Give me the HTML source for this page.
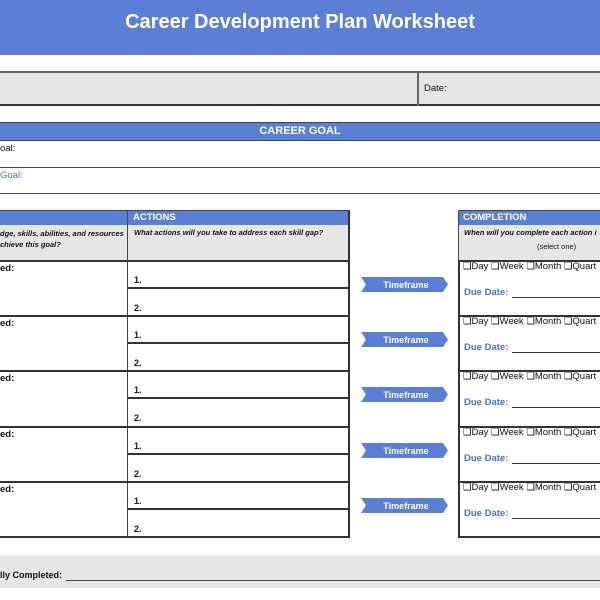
<!DOCTYPE html><html><head><style>
body{margin:0;width:600px;height:600px;background:#fff;position:relative;overflow:hidden;font-family:"Liberation Sans",sans-serif;color:#111}
.a{position:absolute;box-sizing:border-box}
.blue{background:#5a7fd4;color:#fff;font-weight:bold}
.t{position:absolute;white-space:nowrap;font-size:9px}
.b{font-weight:bold}
.bl{color:#4a72c4;font-weight:bold}
</style></head><body>
<div class="a blue" style="left:0;top:0;width:600px;height:55px;font-size:20px;text-align:center;line-height:44px">Career Development Plan Worksheet</div>
<div class="a" style="left:-2px;top:71px;width:604px;height:35px;background:#e6e6e6;border:2px solid #666;border-bottom-color:#333"></div>
<div class="a" style="left:417px;top:71px;width:2px;height:35px;background:#666"></div>
<div class="t" style="left:424px;top:83px;font-size:9.5px">Date:</div>
<div class="a blue" style="left:-2px;top:122px;width:604px;height:19px;border:1px solid #444;font-size:11px;text-align:center;line-height:17px">CAREER GOAL</div>
<div class="a" style="left:-2px;top:140px;width:604px;height:28px;border:1px solid #444;border-top:none"></div>
<div class="a" style="left:-2px;top:167px;width:604px;height:27px;border:1px solid #444;border-top:1px solid #444"></div>
<div class="t" style="left:0;top:143px;font-size:9.5px">oal:</div>
<div class="t" style="left:0;top:170px;color:#4a72c4;font-size:9.5px">Goal:</div>
<div class="a blue" style="left:-2px;top:210px;width:351px;height:16px;border:1px solid #444"></div>
<div class="t b" style="left:133px;top:212px;color:#fff;font-size:9.5px">ACTIONS</div>
<div class="a" style="left:-2px;top:225px;width:351px;height:36px;background:#e6e6e6;border:1px solid #444;border-top:none"></div>
<div class="t" style="left:0;top:228px;font-style:italic;font-weight:bold;font-size:7.5px;line-height:11px">dge, skills, abilities, and resources<br>chieve this goal?</div>
<div class="t" style="left:134px;top:228px;font-style:italic;font-weight:bold;font-size:7.5px">What actions will you take to address each skill gap?</div>
<div class="a" style="left:127px;top:210px;width:1px;height:328px;background:#444"></div>
<div class="a" style="left:348px;top:210px;width:2px;height:328px;background:#333"></div>
<div class="a" style="left:-2px;top:536px;width:352px;height:2px;background:#333"></div>
<div class="a blue" style="left:458px;top:210px;width:150px;height:16px;border:1px solid #444"></div>
<div class="t b" style="left:463px;top:212px;color:#fff;font-size:9.5px">COMPLETION</div>
<div class="a" style="left:458px;top:225px;width:150px;height:36px;background:#e6e6e6;border:1px solid #444;border-top:none"></div>
<div class="t" style="left:464px;top:228px;font-style:italic;font-weight:bold;font-size:7.5px">When will you complete each action i</div>
<div class="t" style="left:537px;top:242px;font-size:7.5px">(select one)</div>
<div class="a" style="left:458px;top:260px;width:2px;height:278px;background:#333"></div>
<div class="a" style="left:458px;top:536px;width:150px;height:2px;background:#333"></div>
<div id="rows"></div>
<div class="a" style="left:0;top:555px;width:600px;height:33px;background:#e6e6e6"></div>
<div class="t b" style="left:0;top:570px">lly Completed:</div>
<div class="a" style="left:66px;top:580px;width:534px;height:1px;background:#444"></div>
<script>
var ys=[260,315,370,426,481],h='';
ys.forEach(function(y){
h+='<div class="a" style="left:-2px;top:'+y+'px;width:352px;height:1.5px;background:#333"></div>';
h+='<div class="a" style="left:127px;top:'+(y+27)+'px;width:222px;height:1.5px;background:#333"></div>';
h+='<div class="t b" style="left:0;top:'+(y+3)+'px;font-size:9.5px">ed:</div>';
h+='<div class="t b" style="left:134px;top:'+(y+15)+'px">1.</div>';
h+='<div class="t b" style="left:134px;top:'+(y+43)+'px">2.</div>';
h+='<svg class="a" style="left:361px;top:'+(y+17)+'px" width="87" height="15"><polygon points="0,0 82,0 87,7.5 82,15 0,15 5,7.5" fill="#5a7fd4"/><text x="45" y="11" fill="#fff" font-size="9" font-weight="bold" text-anchor="middle" font-family="Liberation Sans">Timeframe</text></svg>';
h+='<div class="a" style="left:458px;top:'+y+'px;width:150px;height:1.5px;background:#333"></div>';
h+='<div class="t" style="left:463px;top:'+(y+1)+'px;font-size:9.5px">❑Day ❑Week ❑Month ❑Quart</div>';
h+='<div class="t bl" style="left:464px;top:'+(y+27)+'px;font-size:9.5px">Due Date:</div>';
h+='<div class="a" style="left:512px;top:'+(y+37)+'px;width:90px;height:1px;background:#333"></div>';
});
document.getElementById('rows').innerHTML=h;
</script>
</body></html>
